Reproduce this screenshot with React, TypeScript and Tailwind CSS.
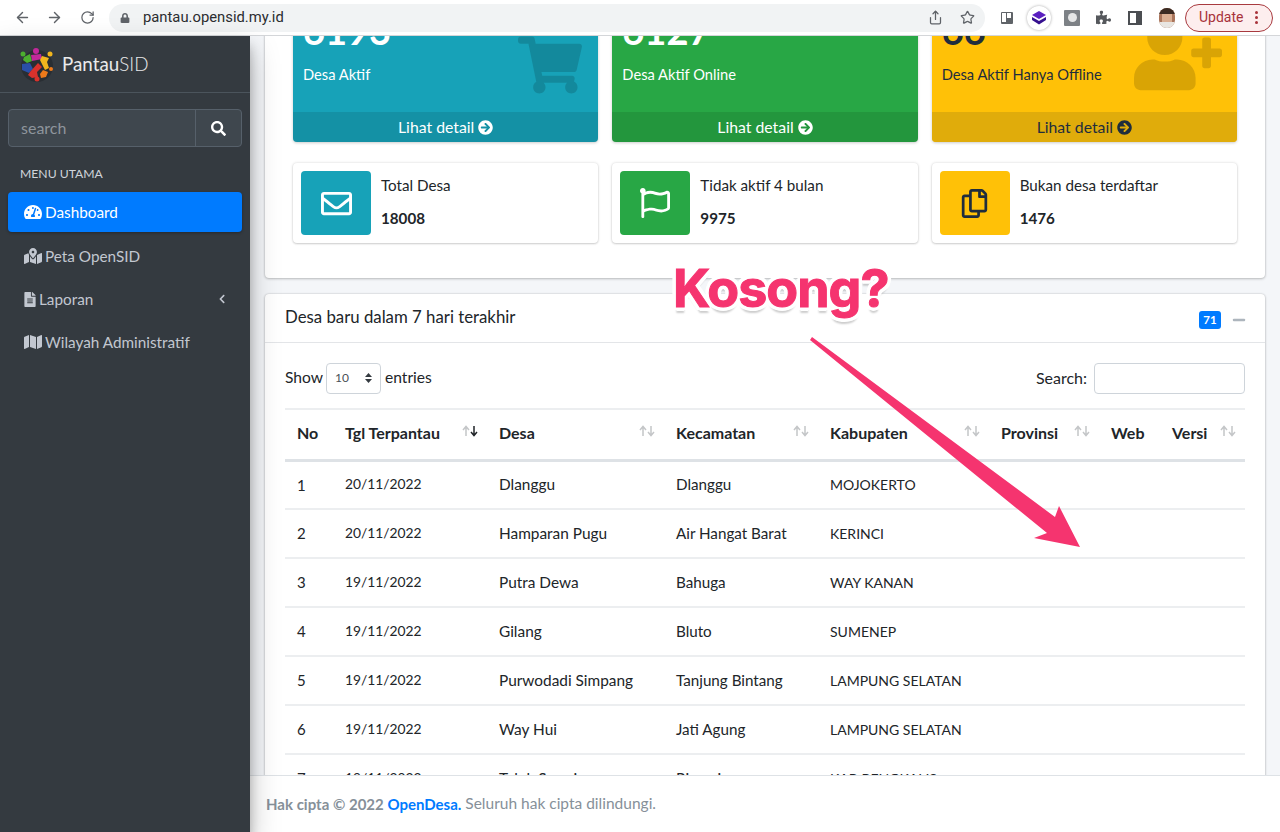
import React from 'react';
import { ArrowLeft, ArrowRight, RotateCw, Star, Share } from 'lucide-react';
import {
    FaTachometerAlt,
    FaMapMarkedAlt,
    FaFileAlt,
    FaMap,
    FaSearch,
    FaChevronLeft,
    FaArrowCircleRight,
    FaShoppingCart,
    FaUserPlus,
    FaRegEnvelope,
    FaRegFlag,
    FaRegCopy,
    FaMinus,
    FaLock,
    FaPuzzlePiece,
} from 'react-icons/fa';

const rows = [
    ['1', '20/11/2022', 'Dlanggu', 'Dlanggu', 'MOJOKERTO'],
    ['2', '20/11/2022', 'Hamparan Pugu', 'Air Hangat Barat', 'KERINCI'],
    ['3', '19/11/2022', 'Putra Dewa', 'Bahuga', 'WAY KANAN'],
    ['4', '19/11/2022', 'Gilang', 'Bluto', 'SUMENEP'],
    ['5', '19/11/2022', 'Purwodadi Simpang', 'Tanjung Bintang', 'LAMPUNG SELATAN'],
    ['6', '19/11/2022', 'Way Hui', 'Jati Agung', 'LAMPUNG SELATAN'],
    ['7', '19/11/2022', 'Teluk Samsir', 'Rimanis', 'KAB BENGKALIS'],
];

// digits and capitals run wide in this font, so those columns get a smaller size
const cellSize = ['text-[15px]', 'text-[13.8px]', 'text-[15.4px]', 'text-[15.2px]', 'text-[14px]'];

const SortIcon = ({ active }: { active?: boolean }) => (
    <svg width="16" height="12" viewBox="0 0 16 12" fill="none" strokeWidth="1.5" className="shrink-0 mb-[3px]">
        <path d="M4 11V2M1 5l3-3.5L7 5" stroke="#c4c6c8" />
        <path d="M12 1v9M9 7l3 3.5L15 7" stroke={active ? '#212529' : '#c4c6c8'} />
    </svg>
);

const Logo = () => (
    <svg width="36" height="38" viewBox="0 0 36 38">
        <circle cx="18" cy="21" r="16" fill="#23272b" opacity="0.6" />
        <circle cx="17" cy="6" r="3" fill="#c2289b" />
        <path d="M12 10l10-1 1 5-10 2z" fill="#c2289b" />
        <circle cx="4" cy="9" r="2.5" fill="#4caf2f" />
        <path d="M5 12l6-3 2 7-5 2-4-3z" fill="#4caf2f" />
        <circle cx="31" cy="9" r="2.5" fill="#f2b61d" />
        <path d="M23 11l7 2-2 4 2 6-4 2-5-10z" fill="#f2b61d" />
        <path d="M3 19l8-1 3 6-4 4-7-3z" fill="#2a4fa8" />
        <circle cx="18" cy="34" r="2.5" fill="#d8322c" />
        <path d="M11 27l8-9 4 4-5 5 1 5-6 1-4-3z" fill="#d8322c" />
        <circle cx="32" cy="24" r="2" fill="#ee7a1a" />
        <path d="M24 25l5 2-2 5-5 1-1-4z" fill="#ee7a1a" />
    </svg>
);

const StatCard = ({
    number,
    label,
    bg,
    dark,
    iconColor,
    icon,
}: {
    number: string;
    label: string;
    bg: string;
    dark?: boolean;
    iconColor: string;
    icon: React.ReactNode;
}) => (
    <div className={`relative rounded-[4px] overflow-hidden shadow-[0_1px_3px_rgba(0,0,0,0.2)] h-[154px] flex flex-col ${bg} ${dark ? 'text-[#1f2d3d]' : 'text-white'}`}>
        <div className="flex-1 px-[10px] pt-[19px] relative">
            <div className="text-[38px] font-bold leading-[46px]">{number}</div>
            <p className="text-[14.7px] leading-[24px] mt-[9px]">{label}</p>
            <div className={`absolute ${iconColor}`}>{icon}</div>
        </div>
        <div className={`h-[30px] flex items-center justify-center gap-[4px] text-[15.8px] ${dark ? 'bg-[#e0ac0b]' : 'bg-black/10'}`}>
            Lihat detail <FaArrowCircleRight size={15} />
        </div>
    </div>
);

const InfoBox = ({ title, value, bg, icon }: { title: string; value: string; bg: string; icon: React.ReactNode }) => (
    <div className="bg-white rounded-[4px] shadow-[0_0_3px_rgba(0,0,0,0.16),0_1px_2px_rgba(0,0,0,0.14)] p-[8px] flex h-[80px]">
        <div className={`w-[70px] h-[64px] rounded-[4px] flex items-center justify-center ${bg}`}>{icon}</div>
        <div className="pl-[10px] flex flex-col text-[#212529] text-[15.2px]">
            <span className="mt-[2px] leading-[24px]">{title}</span>
            <span className="mt-[9px] leading-[24px] font-bold">{value}</span>
        </div>
    </div>
);

const NavItem = ({ icon, label, active, chevron }: { icon: React.ReactNode; label: string; active?: boolean; chevron?: boolean }) => (
    <div className={`h-[40px] rounded-[4px] flex items-center pl-[16px] pr-[16px] gap-[3px] text-[15.3px] ${active ? 'bg-[#007bff] text-white shadow-[0_1px_3px_rgba(0,0,0,0.3)] mb-[1px]' : 'text-[#c2c7d0]'}`}>
        {icon}
        <span>{label}</span>
        {chevron && <FaChevronLeft size={10} className="ml-auto -mr-[1px]" />}
    </div>
);

const Th = ({ label, sort, active }: { label: string; sort?: boolean; active?: boolean }) => (
    <th className="text-left font-bold pl-[12px] pr-[9px] pb-[3px] h-[51px] text-[16px] text-[#212529]">
        <div className="flex items-center justify-between whitespace-nowrap">
            <span>{label}</span>
            {sort && <SortIcon active={active} />}
        </div>
    </th>
);

const App = () => {
    return (
        <div className="w-[1280px] h-[832px] flex flex-col overflow-hidden bg-white font-['Lato','Liberation_Sans',sans-serif]">
            {/* chrome bar */}
            <div className="h-[36px] shrink-0 bg-white border-b border-[#d4d6d9] flex items-center pl-[14px] pr-[7px] text-[#5f6368]">
                <ArrowLeft size={17} />
                <ArrowRight size={17} className="ml-[15px]" />
                <RotateCw size={15} className="ml-[17px]" />
                <div className="ml-[14px] w-[876px] h-[28px] rounded-full bg-[#f1f3f4] flex items-center pl-[11px] pr-[10px]">
                    <FaLock size={10} />
                    <span className="ml-[13px] text-[14.8px] text-[#2b2d30] font-['Roboto',sans-serif]">pantau.opensid.my.id</span>
                    <Share size={15} className="ml-auto" />
                    <Star size={15} className="ml-[17px]" />
                </div>
                <div className="ml-[16px] w-[12px] h-[12px] bg-[#5f6368] rounded-[1px] flex gap-[1px] p-[1px]">
                    <span className="w-[4px] h-[9px] bg-white" />
                    <span className="w-[4px] h-[5px] bg-white" />
                </div>
                <div className="ml-[14px] w-[24px] h-[24px] rounded-full bg-white shadow-[0_0_3px_rgba(0,0,0,0.35)] flex items-center justify-center">
                    <svg width="16" height="16" viewBox="0 0 16 16">
                        <path d="M8 1l7 4-7 4-7-4z" fill="#5a1fc0" />
                        <path d="M1 7l7 4 7-4v3l-7 4.5L1 10z" fill="#35108f" />
                    </svg>
                </div>
                <div className="ml-[13px] w-[16px] h-[16px] rounded-[1px] bg-[#7d8186] flex items-center justify-center">
                    <span className="w-[9px] h-[9px] rounded-full bg-white/80" />
                </div>
                <FaPuzzlePiece size={15} className="ml-[16px] text-[#55585c]" />
                <div className="ml-[17px] w-[14px] h-[14px] border-2 border-[#4b4e52] flex justify-end">
                    <span className="w-[4px] h-full bg-[#4b4e52]" />
                </div>
                <div className="ml-[17px] w-[16px] h-[20px] rounded-full bg-[#a9745a] overflow-hidden flex flex-col items-center">
                    <span className="w-full h-[6px] bg-[#3a2a22]" />
                    <span className="w-[10px] h-[8px] bg-[#d9ae92]" />
                    <span className="w-full h-[6px] bg-[#e8e6e2]" />
                </div>
                <div className="ml-[10px] w-[88px] h-[28px] rounded-full border border-[#a83a3f] bg-[#fdeeee] flex items-center pl-[13px] text-[14px] text-[#a8323a] font-['Roboto',sans-serif]">
                    Update
                    <span className="ml-[12px] flex flex-col gap-[2px]">
                        <span className="w-[3px] h-[3px] rounded-full bg-[#a8323a]" />
                        <span className="w-[3px] h-[3px] rounded-full bg-[#a8323a]" />
                        <span className="w-[3px] h-[3px] rounded-full bg-[#a8323a]" />
                    </span>
                </div>
            </div>

            <div className="flex-1 flex min-h-0">
                {/* sidebar */}
                <aside className="w-[250px] shrink-0 bg-[#343a40] z-10 shadow-[0_14px_28px_rgba(0,0,0,0.25),0_10px_10px_rgba(0,0,0,0.22)]">
                    <div className="h-[57px] border-b border-[#4b545c] flex items-center pl-[19px]">
                        <Logo />
                        <span className="ml-[7px] text-[18.8px] font-light text-white/90">
                            <span className="font-normal">Pantau</span>SID
                        </span>
                    </div>
                    <div className="px-[8px] mt-[16px]">
                        <div className="h-[38px] flex rounded-[4px] border border-[#56606a] bg-[#3f474e] overflow-hidden">
                            <span className="flex-1 pl-[12px] leading-[36px] text-[16px] text-[#8e959c]">search</span>
                            <span className="w-[46px] border-l border-[#56606a] flex items-center justify-center text-white">
                                <FaSearch size={15} />
                            </span>
                        </div>
                    </div>
                    <div className="pl-[20px] mt-[15px] h-[24px] text-[12.2px] leading-[24px] text-[#d0d4db]">MENU UTAMA</div>
                    <nav className="px-[8px] mt-[6px] flex flex-col gap-[3px]">
                        <NavItem active icon={<FaTachometerAlt size={18} />} label="Dashboard" />
                        <NavItem icon={<FaMapMarkedAlt size={18} />} label="Peta OpenSID" />
                        <NavItem icon={<FaFileAlt className="w-[12px] h-[15px]" />} label="Laporan" chevron />
                        <NavItem icon={<FaMap size={18} />} label="Wilayah Administratif" />
                    </nav>
                </aside>

                {/* content */}
                <div className="flex-1 min-w-0 flex flex-col bg-[#f4f6f9]">
                    <main className="relative flex-1 min-h-0 overflow-hidden px-[15px]">
                        <div className="-mt-[76px]">
                            <div className="bg-white rounded-[4px] shadow-[0_0_2px_rgba(0,0,0,0.2),0_1px_3px_rgba(0,0,0,0.2)] px-[28px] pt-[28px] pb-[35px]">
                                <div className="grid grid-cols-3 gap-[14px]">
                                    <StatCard
                                        number="6193"
                                        label="Desa Aktif"
                                        bg="bg-[#17a2b8]"
                                        iconColor="right-[16px] top-[45px] text-black/15"
                                        icon={<FaShoppingCart size={64} />}
                                    />
                                    <StatCard
                                        number="6127"
                                        label="Desa Aktif Online"
                                        bg="bg-[#28a745]"
                                        iconColor="right-[14px] top-[54px] text-black/15"
                                        icon={null}
                                    />
                                    <StatCard
                                        number="66"
                                        label="Desa Aktif Hanya Offline"
                                        bg="bg-[#ffc107]"
                                        dark
                                        iconColor="right-[15px] top-[23px] text-black/15"
                                        icon={<FaUserPlus size={88} />}
                                    />
                                </div>
                                <div className="grid grid-cols-3 gap-[14px] mt-[21px]">
                                    <InfoBox title="Total Desa" value="18008" bg="bg-[#17a2b8] text-white" icon={<FaRegEnvelope size={31} />} />
                                    <InfoBox title="Tidak aktif 4 bulan" value="9975" bg="bg-[#28a745] text-white" icon={<FaRegFlag size={30} />} />
                                    <InfoBox title="Bukan desa terdaftar" value="1476" bg="bg-[#ffc107] text-[#1f2d3d]" icon={<FaRegCopy size={29} />} />
                                </div>
                            </div>

                            <div className="mt-[16px] bg-white rounded-[4px] shadow-[0_0_2px_rgba(0,0,0,0.2),0_1px_3px_rgba(0,0,0,0.2)]">
                                <div className="h-[49px] border-b border-[#e3e5e8] flex items-center pl-[20px] pr-[19px] text-[16.8px] text-[#212529]">
                                    <span className="-mt-[3px]">Desa baru dalam 7 hari terakhir</span>
                                    <span className="ml-auto mt-[3px] w-[22px] h-[18px] rounded-[3px] bg-[#007bff] text-white text-[11.5px] font-bold flex items-center justify-center">71</span>
                                    <FaMinus size={14} className="ml-[11px] mt-[3px] text-[#adb5bd]" />
                                </div>
                                <div className="px-[20px] pt-[20px]">
                                    <div className="flex items-start justify-between text-[16px] text-[#212529]">
                                        <div className="flex items-center gap-[3px] h-[30px]">
                                            <span className="text-[15.6px]">Show</span>
                                            <span className="w-[55px] h-[31px] rounded-[4px] border border-[#ced4da] flex items-center justify-between pl-[8px] pr-[7px] text-[12px] text-[#495057] bg-white">
                                                10
                                                <svg width="9" height="12" viewBox="0 0 9 12" fill="#343a40"><path d="M4.5 1l3.5 4H1zM4.5 11L1 7h7z" /></svg>
                                            </span>
                                            <span className="ml-[1px] text-[15.6px]">entries</span>
                                        </div>
                                        <div className="flex items-center gap-[7px]">
                                            <span className="mb-[2px]">Search:</span>
                                            <span className="w-[151px] h-[31px] rounded-[4px] border border-[#ced4da] bg-white" />
                                        </div>
                                    </div>
                                    <table className="table-fixed w-[960px] mt-[14px] border-t-2 border-[#eceef0] border-collapse">
                                        <colgroup>
                                            <col className="w-[48px]" />
                                            <col className="w-[154px]" />
                                            <col className="w-[177px]" />
                                            <col className="w-[154px]" />
                                            <col className="w-[171px]" />
                                            <col className="w-[110px]" />
                                            <col className="w-[61px]" />
                                            <col className="w-[85px]" />
                                        </colgroup>
                                        <thead>
                                            <tr className="border-b-[3px] border-[#dee2e6]">
                                                <Th label="No" />
                                                <Th label="Tgl Terpantau" sort active />
                                                <Th label="Desa" sort />
                                                <Th label="Kecamatan" sort />
                                                <Th label="Kabupaten" sort />
                                                <Th label="Provinsi" sort />
                                                <Th label="Web" />
                                                <Th label="Versi" sort />
                                            </tr>
                                        </thead>
                                        <tbody>
                                            {rows.map((r) => (
                                                <tr key={r[0]} className="border-b-2 border-[#eceef0] h-[49px] text-[#212529]">
                                                    {r.map((c, i) => (
                                                        <td key={i} className={`pl-[12px] whitespace-nowrap ${cellSize[i]}`}>{c}</td>
                                                    ))}
                                                    <td />
                                                    <td />
                                                    <td />
                                                </tr>
                                            ))}
                                        </tbody>
                                    </table>
                                </div>
                            </div>
                        </div>

                        {/* annotation */}
                        <span className="absolute left-[423px] top-[218px] text-[52px] leading-[70px] font-bold text-[#f5346f] font-['Inter',sans-serif] tracking-[-1px] [-webkit-text-stroke:1px_#f5346f] [text-shadow:4px_0_0_#fff,-4px_0_0_#fff,0_4px_0_#fff,0_-4px_0_#fff,3px_3px_0_#fff,-3px_3px_0_#fff,3px_-3px_0_#fff,-3px_-3px_0_#fff,0_6px_2px_rgba(0,0,0,0.2)]">
                            Kosong?
                        </span>
                        <svg className="absolute left-[550px] top-[295px]" width="290" height="225" viewBox="0 0 290 225">
                            <path d="M10 9 L12 6 L255 186 L259 175 L280 216 L234 207 L247 202 Z" fill="#f5346f" />
                        </svg>
                    </main>
                    <footer className="h-[57px] shrink-0 bg-white border-t border-[#dee2e6] flex items-center pl-[16px] text-[#869099]">
                        <span className="font-bold text-[15px]">Hak cipta © 2022 <span className="text-[#007bff]">OpenDesa.</span></span>
                        <span className="ml-[4px] text-[15.5px]">Seluruh hak cipta dilindungi.</span>
                    </footer>
                </div>
            </div>
        </div>
    );
};

export default App;
